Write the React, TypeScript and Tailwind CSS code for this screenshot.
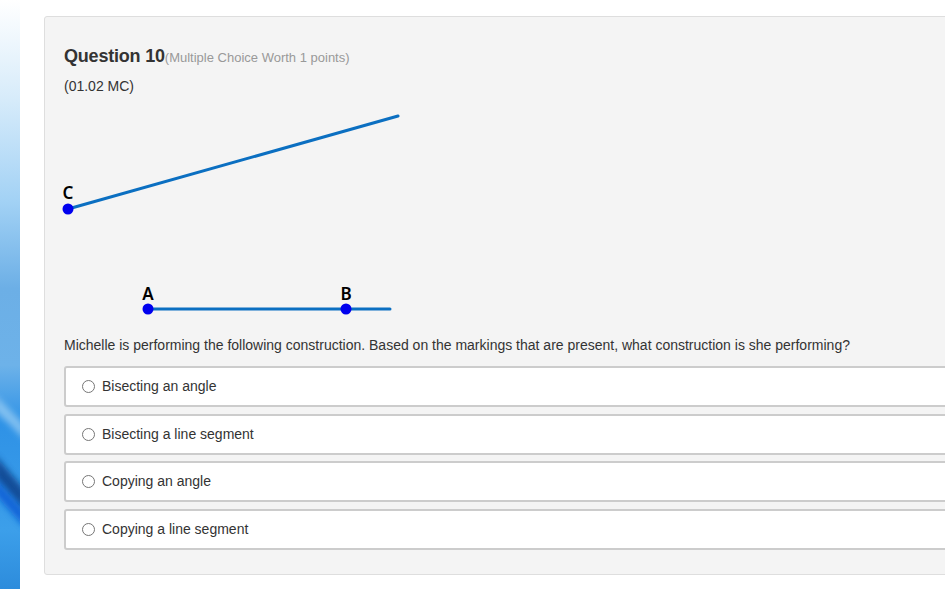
import React from 'react';

const options = [
  'Bisecting an angle',
  'Bisecting a line segment',
  'Copying an angle',
  'Copying a line segment',
];

// decorative blue strip on the far left
function SideStrip() {
  return (
    <svg width="20" height="589" viewBox="0 0 20 589" className="block shrink-0">
      <defs>
        <linearGradient id="sky" x1="0" y1="0" x2="0" y2="1">
          <stop offset="0" stopColor="#ffffff" />
          <stop offset="0.17" stopColor="#d6ebfa" />
          <stop offset="0.34" stopColor="#a3d2f5" />
          <stop offset="0.49" stopColor="#6cafe6" />
          <stop offset="0.62" stopColor="#6db2e9" />
          <stop offset="0.72" stopColor="#2f92e6" />
          <stop offset="0.9" stopColor="#3c9fea" />
          <stop offset="1" stopColor="#2d8cdc" />
        </linearGradient>
        <filter id="soft">
          <feGaussianBlur stdDeviation="3" />
        </filter>
      </defs>
      <rect width="20" height="589" fill="url(#sky)" />
      <polygon points="-5,395 25,425 25,440 -5,410" fill="#9fd0f4" opacity="0.7" filter="url(#soft)" />
      <polygon points="-5,455 25,490 25,512 -5,478" fill="#0b3f8a" opacity="0.85" filter="url(#soft)" />
      <polygon points="-5,478 25,512 25,528 -5,494" fill="#0a5fd6" opacity="0.9" filter="url(#soft)" />
    </svg>
  );
}

function Diagram() {
  const line = '#0b6fc1';
  const dot = '#0000ee';
  return (
    <svg width="360" height="220" viewBox="0 0 360 220" className="block overflow-visible">
      <line x1="4" y1="109" x2="334" y2="16" stroke={line} strokeWidth="3" strokeLinecap="round" />
      <line x1="84" y1="209" x2="326" y2="209" stroke={line} strokeWidth="3" strokeLinecap="round" />
      <circle cx="4" cy="109" r="5.5" fill={dot} />
      <circle cx="84" cy="209" r="5.5" fill={dot} />
      <circle cx="282" cy="209" r="5.5" fill={dot} />
      <g fontFamily="'Noto Sans', 'Open Sans', sans-serif" fontWeight="600" fontSize="17" fill="#000" textAnchor="middle">
        <text x="4" y="99">C</text>
        <text x="84" y="200">A</text>
        <text x="282" y="200">B</text>
      </g>
    </svg>
  );
}

export default function App() {
  return (
    <div className="w-[945px] h-[589px] overflow-hidden bg-white flex font-['Liberation_Sans',Arial,sans-serif] text-[#333]">
      <SideStrip />
      <div className="pl-[24px] pt-[16px]">
        <div className="w-[960px] bg-[#f4f4f4] border border-[#dedede] rounded-[3px] pl-[19px] pt-[28px] pb-[24px]">
          <div className="flex items-baseline leading-[22px]">
            <span className="text-[18px] font-bold text-[#333] tracking-[-0.2px]">Question 10</span>
            <span className="text-[13px] text-[#999]">(Multiple Choice Worth 1 points)</span>
          </div>
          <div className="mt-[8px] text-[14px] leading-[18px]">(01.02 MC)</div>

          <div className="mt-[5px]">
            <Diagram />
          </div>

          <p className="mt-[15px] text-[14px] leading-[20px]">
            Michelle is performing the following construction. Based on the markings that are present, what construction is she performing?
          </p>

          <div className="mt-[11px] flex flex-col gap-[6.5px]">
            {options.map((o) => (
              <div
                key={o}
                className="h-[41px] bg-white border-2 border-[#cccccc] rounded-[3px] flex items-center pl-[16px]"
              >
                <span className="w-[13px] h-[13px] rounded-full border border-[#767676] bg-white shrink-0" />
                <span className="ml-[7px] text-[14px]">{o}</span>
              </div>
            ))}
          </div>
        </div>
      </div>
    </div>
  );
}
